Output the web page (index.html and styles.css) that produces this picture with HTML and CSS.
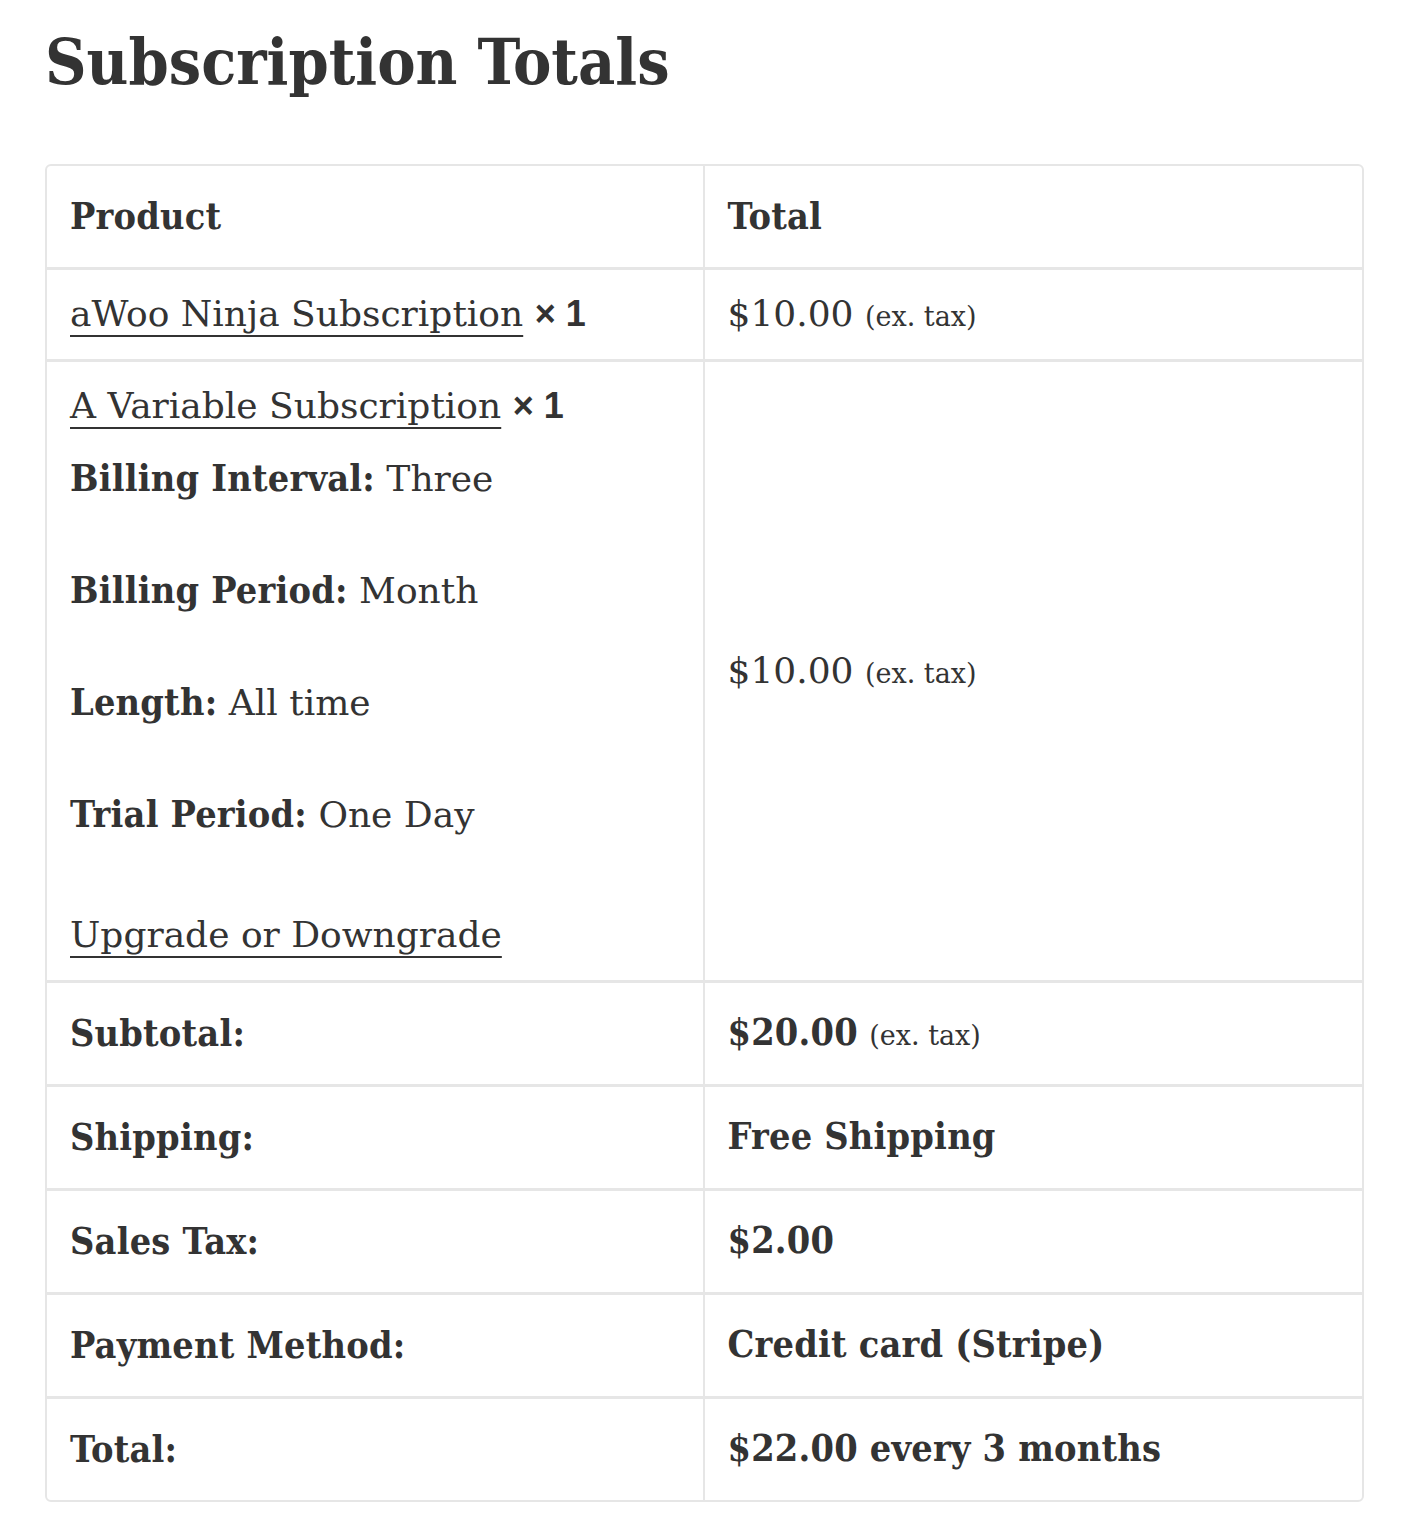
FILE: index.html
```html
<!DOCTYPE html>
<html lang="en">
<head>
    <meta charset="UTF-8">
    <title>Subscription Totals</title>
    <link rel="stylesheet" href="styles.css">
</head>
<body>
    <div class="page">
        <h2 class="title">Subscription Totals</h2>
        <table class="totals">
            <thead>
                <tr>
                    <th>Product</th>
                    <th>Total</th>
                </tr>
            </thead>
            <tbody>
                <tr class="item">
                    <td><a href="#">aWoo Ninja Subscription</a> <strong class="qty">× 1</strong></td>
                    <td>$10.00 <small>(ex. tax)</small></td>
                </tr>
                <tr class="item">
                    <td>
                        <div class="name"><a href="#">A Variable Subscription</a> <strong class="qty">× 1</strong></div>
                        <ul class="meta">
                            <li><strong>Billing Interval:</strong> Three</li>
                            <li><strong>Billing Period:</strong> Month</li>
                            <li><strong>Length:</strong> All time</li>
                            <li><strong>Trial Period:</strong> One Day</li>
                        </ul>
                        <a class="switch" href="#">Upgrade or Downgrade</a>
                    </td>
                    <td>$10.00 <small>(ex. tax)</small></td>
                </tr>
            </tbody>
            <tfoot>
                <tr>
                    <th>Subtotal:</th>
                    <td><strong>$20.00</strong> <small>(ex. tax)</small></td>
                </tr>
                <tr>
                    <th>Shipping:</th>
                    <td><strong>Free Shipping</strong></td>
                </tr>
                <tr>
                    <th>Sales Tax:</th>
                    <td><strong>$2.00</strong></td>
                </tr>
                <tr>
                    <th>Payment Method:</th>
                    <td><strong>Credit card (Stripe)</strong></td>
                </tr>
                <tr>
                    <th>Total:</th>
                    <td><strong>$22.00 every 3 months</strong></td>
                </tr>
            </tfoot>
        </table>
    </div>
</body>
</html>
```

FILE: styles.css
```css
* {
    padding: 0;
    margin: 0;
    box-sizing: border-box;
}
body {
    font-family: "DejaVu Serif", serif;
    color: #333;
    background: #fff;
}
.page {
    padding: 22px 50px 0 45px;
}
.title {
    font-family: "DejaVu Serif Condensed", "DejaVu Serif", serif;
    font-size: 64px;
    line-height: 80px;
    font-weight: bold;
    margin-bottom: 62px;
}
.totals {
    width: 100%;
    table-layout: fixed;
    border-collapse: separate;
    border-spacing: 0;
    border: 2px solid #e6e6e6;
    border-radius: 6px;
    font-size: 36px;
    line-height: 44px;
}
.totals th,
.totals td {
    text-align: left;
    vertical-align: middle;
    padding: 28px 24px 29px 23px;
    border-top: 3px solid #e6e6e6;
}
.totals th:first-child,
.totals td:first-child {
    border-right: 2px solid #e6e6e6;
}
.totals thead th {
    border-top: none;
}
.totals .item td {
    padding: 22px 24px 23px 23px;
}
.totals th,
.totals strong {
    font-family: "DejaVu Serif Condensed", "DejaVu Serif", serif;
    font-weight: bold;
    font-size: 37.5px;
    letter-spacing: 0.2px;
}
.totals strong {
    line-height: 1;
}
.totals a {
    color: #333;
    text-decoration: underline;
    text-decoration-thickness: 2px;
    text-underline-offset: 9px;
}
.totals .qty {
    font-family: "Liberation Sans", sans-serif;
    font-size: 36px;
    letter-spacing: 0;
}
.totals small {
    font-size: 27px;
    line-height: 1;
}
.meta {
    list-style: none;
    margin-top: 29px;
}
.meta li {
    margin-bottom: 68px;
}
.meta li:last-child {
    margin-bottom: 76px;
}
.switch {
    display: inline-block;
}
```
